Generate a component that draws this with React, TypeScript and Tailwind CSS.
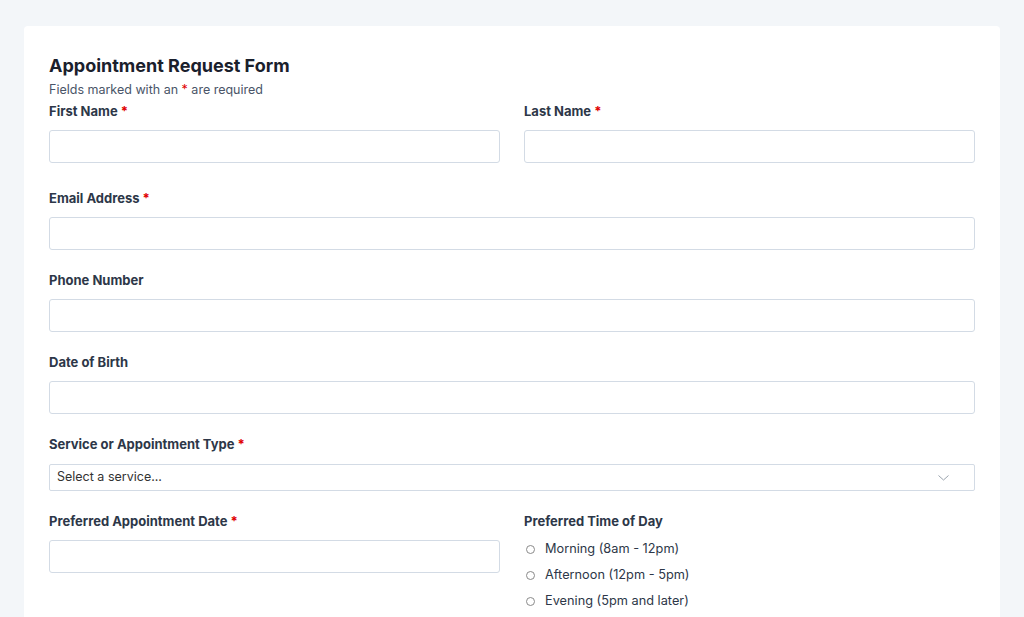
import React from 'react';

const font = { fontFamily: 'Inter, "Liberation Sans", sans-serif' };

function Req() {
  return <span className="text-[#e00000]"> *</span>;
}

function Label({ children, required, className = 'mb-[11px]' }: { children: React.ReactNode; required?: boolean; className?: string }) {
  return (
    <label className={`block text-[13px] font-bold leading-4 text-[#2d3748] ${className}`}>
      {children}
      {required && <Req />}
    </label>
  );
}

function Input() {
  return <input className="block h-[33px] w-full rounded-[3px] border border-[#d3dbe5] bg-white px-2 text-[13px] outline-none" />;
}

function Field({ label, required, className = 'mb-[22px]' }: { label: string; required?: boolean; className?: string }) {
  return (
    <div className={className}>
      <Label required={required}>{label}</Label>
      <Input />
    </div>
  );
}

function Radio({ text }: { text: string }) {
  return (
    <div className="flex items-center leading-5">
      <span className="ml-[2px] mr-[10px] h-[9px] w-[9px] rounded-full border border-[#8a8a8a] bg-white" />
      <span className="text-[12.75px] text-[#2d3748]">{text}</span>
    </div>
  );
}

export default function App() {
  return (
    <div className="min-h-screen bg-[#f3f6f9] px-6 pt-[26px]" style={font}>
      <div className="min-h-[600px] rounded-t-sm bg-white px-[25px] pt-[28px]">
        <h1 className="text-[18px] font-bold leading-6 text-[#1a202c]">Appointment Request Form</h1>
        <p className="mt-[2px] text-[12.5px] leading-5 text-[#4a5568]">
          Fields marked with an <span className="text-[#e00000]">*</span> are required
        </p>

        <div className="mt-[3px] grid grid-cols-2 gap-x-6">
          <Field label="First Name" required className="mb-[27px]" />
          <Field label="Last Name" required className="mb-[27px]" />
        </div>

        <Field label="Email Address" required />
        <Field label="Phone Number" />
        <Field label="Date of Birth" />

        <div className="mb-[22px]">
          <Label required className="mb-3">Service or Appointment Type</Label>
          <div className="relative flex h-[27px] w-full items-center rounded-[2px] border border-[#d3dbe5] bg-white pl-[7px]">
            <span className="text-[12.5px] text-[#333]">Select a service...</span>
            <svg className="absolute right-[25px] top-[10px]" width="11" height="6" viewBox="0 0 11 6" fill="none">
              <polyline points="0.5,0.5 5.5,5 10.5,0.5" stroke="#9aa3ad" strokeWidth="1" />
            </svg>
          </div>
        </div>

        <div className="grid grid-cols-2 gap-x-6">
          <Field label="Preferred Appointment Date" required className="" />
          <div>
            <Label className="mb-[10px]">Preferred Time of Day</Label>
            <div className="flex flex-col gap-[6px]">
              <Radio text="Morning (8am - 12pm)" />
              <Radio text="Afternoon (12pm - 5pm)" />
              <Radio text="Evening (5pm and later)" />
            </div>
          </div>
        </div>
      </div>
    </div>
  );
}
